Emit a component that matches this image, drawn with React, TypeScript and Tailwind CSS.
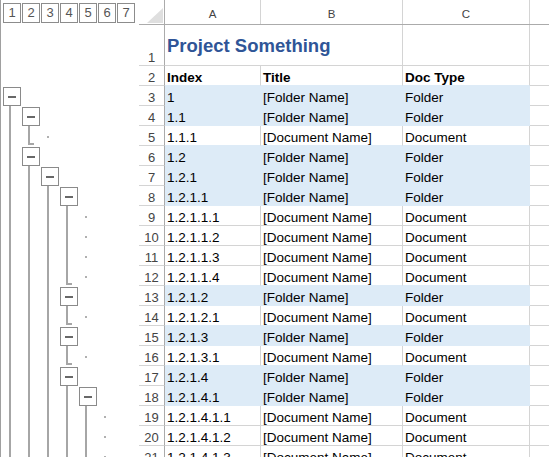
import React from 'react';

// index, kind (F = folder, D = document)
const ROWS: [string, 'F' | 'D'][] = [
  ['1', 'F'], ['1.1', 'F'], ['1.1.1', 'D'], ['1.2', 'F'], ['1.2.1', 'F'], ['1.2.1.1', 'F'],
  ['1.2.1.1.1', 'D'], ['1.2.1.1.2', 'D'], ['1.2.1.1.3', 'D'], ['1.2.1.1.4', 'D'],
  ['1.2.1.2', 'F'], ['1.2.1.2.1', 'D'], ['1.2.1.3', 'F'], ['1.2.1.3.1', 'D'],
  ['1.2.1.4', 'F'], ['1.2.1.4.1', 'F'], ['1.2.1.4.1.1', 'D'], ['1.2.1.4.1.2', 'D'], ['1.2.1.4.1.3', 'D'],
];

// outline gutter per row: | line, B collapse button, L end of group, . detail dot
const OUTLINE = [
  'B', '|B', '|L.', '|B', '||B', '|||B', '||||.', '||||.', '||||.', '|||L.',
  '|||B', '|||L.', '|||B', '|||L.', '|||B', '||||B', '|||||.', '|||||.', '|||||.',
];

const Slot = ({ kind }: { kind: string }) => {
  if (kind === 'B')
    return (
      <div className="w-[19px] h-[20px] pt-[1px] shrink-0">
        <div className="w-[18px] h-[19px] border border-[#8a8a8a] bg-white flex items-center justify-center">
          <div className="w-[8px] h-[2px] bg-[#686868]" />
        </div>
      </div>
    );
  if (kind === '|')
    return (
      <div className="w-[19px] h-[20px] pl-[6px] shrink-0">
        <div className="w-[2px] h-full bg-[#a6a6a6]" />
      </div>
    );
  if (kind === 'L')
    return (
      <div className="w-[19px] h-[20px] pl-[6px] shrink-0">
        <div className="w-[6px] h-[19px] border-l-2 border-b-2 border-[#a6a6a6]" />
      </div>
    );
  if (kind === '.')
    return (
      <div className="w-[19px] h-[20px] pl-[6px] pt-[10px] shrink-0">
        <div className="w-[2px] h-[2px] bg-[#b0b0b0]" />
      </div>
    );
  return <div className="w-[19px] h-[20px] shrink-0" />;
};

const RowNum = ({ n, tall }: { n: number; tall?: boolean }) => (
  <div
    className={`w-[26px] shrink-0 ${tall ? 'h-[41px]' : 'h-[20px]'} border-r border-r-[#ababab] border-b border-b-[#d4d4d4] flex items-end justify-center leading-[15px] text-[13px] font-normal text-[#444]`}
  >
    {n}
  </div>
);

const App = () => {
  const isBlue = (i: number) => i >= 0 && i < ROWS.length && ROWS[i][1] === 'F';

  return (
    <div className="w-[549px] h-[457px] overflow-hidden bg-white flex font-['Liberation_Sans',Arial,sans-serif]">

      {/* Outline gutter */}
      <div className="w-[139px] shrink-0 border-l border-[#a0a0a0] pl-[2px]">
        <div className="h-[25px] pt-[3px] flex gap-[1px]">
          {[1, 2, 3, 4, 5, 6, 7].map((n) => (
            <div key={n} className="w-[18px] h-[20px] border border-[#8c8c8c] flex items-center justify-center text-[13px] text-[#555]">
              {n}
            </div>
          ))}
        </div>
        <div className="h-[41px]" />
        <div className="h-[20px]" />
        {OUTLINE.map((s, i) => (
          <div key={i} className="flex h-[20px]">
            {s.split('').map((ch, k) => (
              <Slot key={k} kind={ch} />
            ))}
          </div>
        ))}
      </div>

      {/* Sheet */}
      <div className="flex-1 min-w-0 flex flex-col">
        {/* Column headers */}
        <div className="flex h-[25px] shrink-0 border-b border-[#ababab] text-[11.5px] text-[#444]">
          <div className="w-[26px] shrink-0 border-r border-[#ababab] flex items-end justify-end pr-[1px] pb-[1px]">
            <svg width="16" height="15" viewBox="0 0 16 15">
              <polygon points="0,15 16,15 16,0" fill="#dfdfdf" />
            </svg>
          </div>
          <div className="w-[96px] shrink-0 border-r border-[#d4d4d4] flex items-center justify-center pt-[5px]">A</div>
          <div className="w-[142px] shrink-0 border-r border-[#d4d4d4] flex items-center justify-center pt-[5px]">B</div>
          <div className="w-[127px] shrink-0 border-r border-[#d4d4d4] flex items-center justify-center pt-[5px]">C</div>
          <div className="flex-1" />
        </div>

        {/* Row 1 - title */}
        <div className="flex h-[41px] shrink-0">
          <RowNum n={1} tall />
          <div className="w-[96px] shrink-0 border-b border-[#d4d4d4] flex items-center pl-[2px] pt-[2px] whitespace-nowrap">
            <span className="text-[18.5px] font-bold text-[#2f5597]">Project Something</span>
          </div>
          <div className="w-[142px] shrink-0 border-r border-b border-[#d4d4d4]" />
          <div className="w-[127px] shrink-0 border-r border-b border-[#d4d4d4]" />
          <div className="flex-1 border-b border-[#d4d4d4]" />
        </div>

        {/* Row 2 - headers */}
        <div className="flex h-[20px] shrink-0 text-[13.5px] text-black leading-[15px]">
          <RowNum n={2} />
          <div className="w-[96px] shrink-0 border-r border-r-[#d4d4d4] border-b border-b-[#ddebf7] flex items-end pl-[2px] font-bold">Index</div>
          <div className="w-[142px] shrink-0 border-r border-r-[#d4d4d4] border-b border-b-[#ddebf7] flex items-end pl-[2px] font-bold">Title</div>
          <div className="w-[127px] shrink-0 border-r border-r-[#d4d4d4] border-b border-b-[#ddebf7] flex items-end pl-[2px] font-bold">Doc Type</div>
          <div className="flex-1 border-b border-[#d4d4d4]" />
        </div>

        {/* Data rows */}
        {ROWS.map(([idx, kind], i) => {
          const blue = isBlue(i);
          const edge = blue || isBlue(i + 1);
          const cell = `shrink-0 border-r border-b flex items-end pl-[2px] whitespace-nowrap overflow-hidden ${
            blue ? 'bg-[#ddebf7] border-r-[#ddebf7]' : 'border-r-[#d4d4d4]'
          } ${edge ? 'border-b-[#ddebf7]' : 'border-b-[#d4d4d4]'}`;
          return (
            <div key={idx} className="flex h-[20px] shrink-0 text-[13.5px] text-black leading-[15px]">
              <RowNum n={i + 3} />
              <div className={`w-[96px] ${cell}`}>{idx}</div>
              <div className={`w-[142px] ${cell}`}>{kind === 'F' ? '[Folder Name]' : '[Document Name]'}</div>
              <div className={`w-[127px] ${cell}`}>{kind === 'F' ? 'Folder' : 'Document'}</div>
              <div className="flex-1 border-b border-[#d4d4d4]" />
            </div>
          );
        })}
      </div>
    </div>
  );
};

export default App;
